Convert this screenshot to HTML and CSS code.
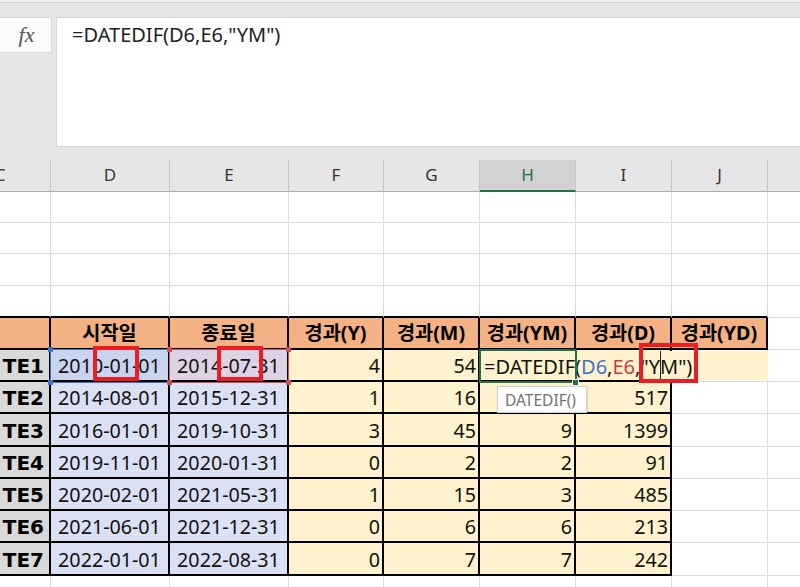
FILE: index.html
```html
<!DOCTYPE html>
<html lang="ko">
<head>
<meta charset="utf-8">
<title>DATEDIF</title>
<link rel="stylesheet" href="styles.css">
</head>
<body>
<div class="topstrip"></div>
<div class="fbar">
  <div class="fxcol"><div class="fxbtn"><i>fx</i></div></div>
  <div class="formula">=DATEDIF(D6,E6,"YM")</div>
</div>
<div class="gap"></div>
<div class="sheetwrap">
  <div class="sheet">
    <div class="ch">C</div><div class="ch">D</div><div class="ch">E</div><div class="ch">F</div><div class="ch">G</div><div class="ch sel">H</div><div class="ch">I</div><div class="ch">J</div><div class="ch"></div>

    <div class="g"></div><div class="g"></div><div class="g"></div><div class="g"></div><div class="g"></div><div class="g"></div><div class="g"></div><div class="g"></div><div class="g"></div>
    <div class="g"></div><div class="g"></div><div class="g"></div><div class="g"></div><div class="g"></div><div class="g"></div><div class="g"></div><div class="g"></div><div class="g"></div>
    <div class="g"></div><div class="g"></div><div class="g"></div><div class="g"></div><div class="g"></div><div class="g"></div><div class="g"></div><div class="g"></div><div class="g"></div>
    <div class="g ab"></div><div class="g ab"></div><div class="g ab"></div><div class="g ab"></div><div class="g ab"></div><div class="g ab"></div><div class="g ab"></div><div class="g ab"></div><div class="g"></div>

    <div class="t hd"></div><div class="t hd">시작일</div><div class="t hd">종료일</div><div class="t hd">경과(Y)</div><div class="t hd">경과(M)</div><div class="t hd">경과(YM)</div><div class="t hd">경과(D)</div><div class="t hd">경과(YD)</div><div class="g"></div>

    <div class="t lb">TE1</div><div class="t dt d6">2010-01-01</div><div class="t dt e6">2014-07-31</div><div class="t nu">4</div><div class="t nu">54</div><div class="t nu"></div><div class="t nu"></div><div class="g"></div><div class="g"></div>
    <div class="t lb">TE2</div><div class="t dt">2014-08-01</div><div class="t dt">2015-12-31</div><div class="t nu">1</div><div class="t nu">16</div><div class="t nu"></div><div class="t nu">517</div><div class="g"></div><div class="g"></div>
    <div class="t lb">TE3</div><div class="t dt">2016-01-01</div><div class="t dt">2019-10-31</div><div class="t nu">3</div><div class="t nu">45</div><div class="t nu">9</div><div class="t nu">1399</div><div class="g"></div><div class="g"></div>
    <div class="t lb">TE4</div><div class="t dt">2019-11-01</div><div class="t dt">2020-01-31</div><div class="t nu">0</div><div class="t nu">2</div><div class="t nu">2</div><div class="t nu">91</div><div class="g"></div><div class="g"></div>
    <div class="t lb">TE5</div><div class="t dt">2020-02-01</div><div class="t dt">2021-05-31</div><div class="t nu">1</div><div class="t nu">15</div><div class="t nu">3</div><div class="t nu">485</div><div class="g"></div><div class="g"></div>
    <div class="t lb">TE6</div><div class="t dt">2021-06-01</div><div class="t dt">2021-12-31</div><div class="t nu">0</div><div class="t nu">6</div><div class="t nu">6</div><div class="t nu">213</div><div class="g"></div><div class="g"></div>
    <div class="t lb">TE7</div><div class="t dt">2022-01-01</div><div class="t dt">2022-08-31</div><div class="t nu">0</div><div class="t nu">7</div><div class="t nu">7</div><div class="t nu">242</div><div class="g"></div><div class="g"></div>

    <div class="g"></div><div class="g"></div><div class="g"></div><div class="g"></div><div class="g"></div><div class="g"></div><div class="g"></div><div class="g"></div><div class="g"></div>
  </div>

  <div class="range rd"><span class="h tl"></span><span class="h tr"></span><span class="h bl"></span><span class="h br"></span></div>
  <div class="range re"><span class="h tl"></span><span class="h tr"></span><span class="h bl"></span><span class="h br"></span></div>

  <div class="edtext">=DATEDIF(<span class="rb">D6</span>,<span class="rr">E6</span>,"YM")</div>
  <div class="editor"></div>
  <div class="caret"></div>
  <div class="fill"></div>
  <div class="tip">DATEDIF()</div>

  <div class="mark m1"></div>
  <div class="mark m2"></div>
  <div class="mark m3"></div>
</div>
</body>
</html>
```

FILE: styles.css
```css
* { box-sizing: border-box; margin: 0; padding: 0; }
html, body { width: 800px; height: 587px; overflow: hidden; background: #e6e6e6; }
body { font-family: "Noto Sans", "Noto Sans CJK KR", sans-serif; color: #000; }

.topstrip { height: 17px; background: linear-gradient(#f3f3f3 0 2px, #d2d2d2 2px 3px, #e6e6e6 3px); }

.fbar { display: flex; gap: 4px; height: 130px; }
.fxcol { width: 53px; margin-left: -1px; }
.fxbtn { height: 36px; background: #fbfbfb; border: 1px solid #d6d6d6; display: flex; align-items: center; justify-content: center; padding-left: 2px; }
.fxbtn i { font-family: "Liberation Serif", serif; font-style: italic; font-size: 22px; color: #555; }
.formula { flex: 1; margin-right: -1px; background: #fff; border: 1px solid #d6d6d6; padding: 5px 0 0 15px; font-size: 20px; line-height: 24px; color: #222; }

.gap { height: 13px; }

.sheetwrap { position: relative; height: 427px; overflow: hidden; background: #fff; }
.sheet {
  display: grid;
  grid-template-columns: 101px 119px 119px 95px 96px 96px 96px 96px 96px;
  grid-template-rows: 32px 31px 31px 32px 32px 32px 32px 32px 33px 32px 32px 32px 33px 32px;
  margin-left: -50px;
  width: 914px;
  font-size: 19.7px;
  line-height: 1.2;
}

.ch { background: #e6e6e6; border-right: 1px solid #c6c6c6; border-bottom: 1px solid #ababab; display: flex; align-items: center; justify-content: center; font-size: 17px; color: #333; }
.ch.sel { background: #d2d2d2; color: #217346; border-bottom: 2px solid #217346; }

.g { background: #fff; border-right: 1px solid #dadada; border-bottom: 1px solid #dadada; }
.g.ab { border-bottom: 2px solid #000; }

.t { border-right: 2px solid #000; border-bottom: 2px solid #000; display: flex; align-items: center; white-space: nowrap; padding-top: 2px; }
.hd { background: #f4b183; font-weight: 700; justify-content: center; padding-top: 0; }
.lb { background: #d9d9d9; font-family: "DejaVu Sans", sans-serif; font-weight: 700; font-size: 20px; justify-content: flex-end; padding-right: 5px; }
.dt { background: #d9e1f2; justify-content: center; color: #111; }
.dt.d6 { background: #c9d5ee; }
.dt.e6 { background: #ddd3e4; }
.nu { background: #fff2cc; justify-content: flex-end; padding-right: 2px; color: #111; }

.range { position: absolute; top: 189px; width: 120px; height: 34px; border: 1px solid; }
.rd { left: 50px; border-color: #4472c4; }
.re { left: 169px; border-color: #c9505c; }
.h { position: absolute; width: 5px; height: 5px; }
.rd .h { background: #4472c4; }
.re .h { background: #c9505c; }
.tl { left: -3px; top: -3px; }
.tr { right: -3px; top: -3px; }
.bl { left: -3px; bottom: -3px; }
.br { right: -3px; bottom: -3px; }

.edtext { position: absolute; left: 481px; top: 191px; width: 287px; height: 29px; background: #fff2cc; display: flex; align-items: center; padding: 2px 0 0 3px; font-size: 20px; white-space: nowrap; color: #111; }
.rb { color: #3f72cf; }
.rr { color: #cc3b44; }
.editor { position: absolute; left: 479px; top: 189px; width: 98px; height: 34px; border: 2px solid #217346; }
.caret { position: absolute; left: 660px; top: 191px; width: 1px; height: 31px; background: #1b1d3a; }
.fill { position: absolute; left: 572px; top: 219px; width: 7px; height: 7px; background: #217346; border: 1px solid #fff; }
.tip { position: absolute; left: 497px; top: 226px; width: 90px; height: 27px; background: #fff; border: 1px solid #cfcfcf; box-shadow: 1px 1px 2px rgba(0,0,0,0.12); font-size: 15.5px; color: #727272; padding-left: 7px; display: flex; align-items: center; }

.mark { position: absolute; border: 4px solid #ec1c24; }
.m1 { left: 93px; top: 186px; width: 46px; height: 35px; }
.m2 { left: 217px; top: 186px; width: 46px; height: 35px; }
.m3 { left: 639px; top: 183px; width: 59px; height: 40px; }
```
